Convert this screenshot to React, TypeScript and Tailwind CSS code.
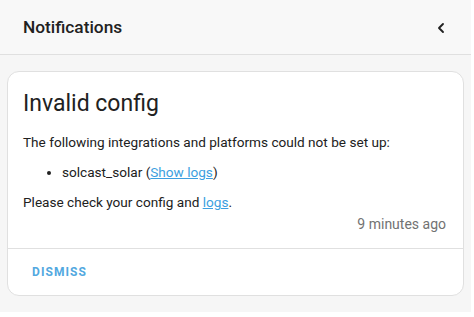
import { ChevronLeft } from 'lucide-react';

export default function App() {
  return (
    <div className="h-[317px] w-[474px] bg-white font-['Roboto',sans-serif]">
      <div className="h-[312px] w-[471px] bg-[#f6f6f6]">
        <div className="flex h-[55px] items-center justify-between border-b border-[#e0e0e0] bg-[#f8f8f8] pt-[2px] pl-[23px] pr-[22px]">
          <h1 className="text-[17.3px] font-medium text-[#212121]">Notifications</h1>
          <ChevronLeft className="h-[16px] w-[16px] text-[#212121]" strokeWidth={2.8} />
        </div>
        <div className="px-[7px] pt-[16px]">
          <div className="rounded-[12px] border border-[#e0e0e0] bg-white">
            <div className="pl-[15px] pr-[17px] pt-[16px] pb-[14px] text-[13.6px] text-[#212121]">
              <h2 className="text-[23px] leading-[32px]">Invalid config</h2>
              <p className="mt-[12px] leading-[20px]">
                The following integrations and platforms could not be set up:
              </p>
              <ul className="mt-[10px] list-disc pl-[39px] leading-[20px]">
                <li>
                  solcast_solar (
                  <a className="text-[#3d9fe0] underline" href="#">
                    Show logs
                  </a>
                  )
                </li>
              </ul>
              <p className="mt-[10px] leading-[20px]">
                Please check your config and{' '}
                <a className="text-[#3d9fe0] underline" href="#">
                  logs
                </a>
                .
              </p>
              <div className="mt-[2px] text-right text-[14px] leading-[20px] text-[#727272]">9 minutes ago</div>
            </div>
            <div className="border-t border-[#e0e0e0] px-[8px] py-[7px]">
              <button className="px-[16px] py-[7px] text-[12px] font-bold uppercase tracking-[0.09em] text-[#52a8e0]">
                Dismiss
              </button>
            </div>
          </div>
        </div>
      </div>
    </div>
  );
}
